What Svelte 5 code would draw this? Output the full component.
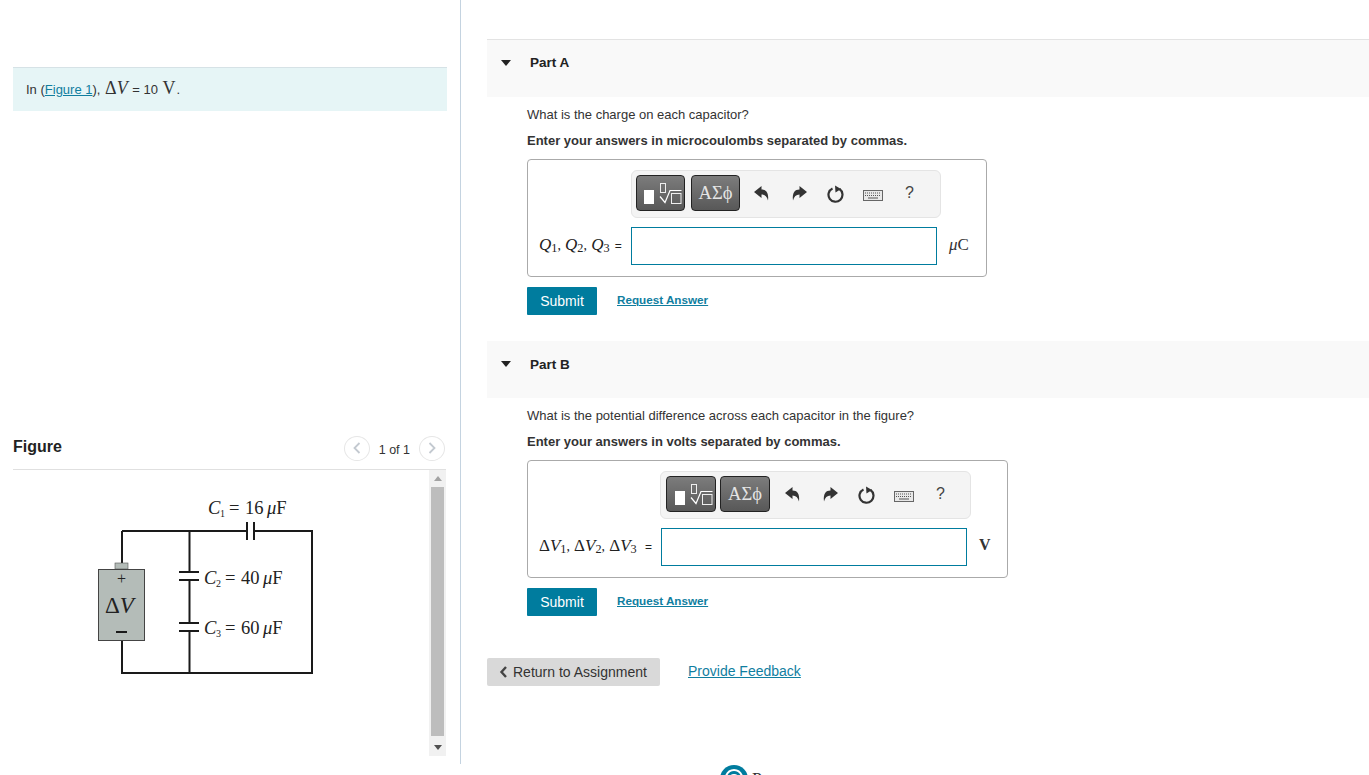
<script lang="ts">
  const parts = [
    {
      id: 'a',
      name: 'Part A',
      question: 'What is the charge on each capacitor?',
      hint: 'Enter your answers in microcoulombs separated by commas.',
    },
    {
      id: 'b',
      name: 'Part B',
      question: 'What is the potential difference across each capacitor in the figure?',
      hint: 'Enter your answers in volts separated by commas.',
    },
  ];
</script>

{#snippet toolbar()}
  <div class="toolbar">
    <button class="tool" aria-label="Templates">
      <svg width="47" height="34" viewBox="0 0 47 34">
        <rect x="7" y="14" width="10" height="14" fill="#fff" />
        <rect x="23.500" y="7.500" width="5" height="9" fill="none" stroke="#eee" />
        <path d="M23 20.500 L28 26.500 L33 14.500 H44.500" fill="none" stroke="#fff" stroke-width="1.200" />
        <rect x="34.500" y="17.500" width="9.500" height="10" fill="none" stroke="#eee" />
      </svg>
    </button>
    <button class="tool greek">ΑΣϕ</button>
    <svg class="ico undo" width="15" height="15" viewBox="0 0 15 15">
      <path d="M0 6 L7.500 0 V3.500 C12 3.500 15 6.500 14 14.500 C13 10.500 11 8.500 7.500 8.500 V12 Z" fill="#333" />
    </svg>
    <svg class="ico redo" width="15" height="15" viewBox="0 0 15 15">
      <path d="M15 6 L7.500 0 V3.500 C3 3.500 0 6.500 1 14.500 C2 10.500 4 8.500 7.500 8.500 V12 Z" fill="#333" />
    </svg>
    <svg class="ico reset" width="18" height="18" viewBox="0 0 18 18">
      <path d="M12.500 4 A7 7 0 1 1 5.500 3.400" fill="none" stroke="#333" stroke-width="2.200" />
      <path d="M8 0.500 L14 4 L8.500 7.500 Z" fill="#333" />
    </svg>
    <svg class="ico kbd" width="20" height="11" viewBox="0 0 20 11">
      <rect x="0.500" y="0.500" width="19" height="10" fill="#e8e8e8" stroke="#666" />
      <path d="M2 3 H18 M2 5.500 H18" stroke="#555" stroke-dasharray="1 1" />
      <path d="M5 8 H15" stroke="#555" />
    </svg>
    <span class="help">?</span>
  </div>
{/snippet}

{#snippet partA()}
  <span class="math"><i>Q</i><sub>1</sub><small>,</small> <i>Q</i><sub>2</sub><small>,</small> <i>Q</i><sub>3</sub></span> =
{/snippet}

{#snippet partB()}
  <span class="math">Δ<i>V</i><sub>1</sub><small>,</small> Δ<i>V</i><sub>2</sub><small>,</small> Δ<i>V</i><sub>3</sub></span> =
{/snippet}

{#snippet capLabel(x: number, y: number, n: number, val: string)}
  <text class="lbl cap" {x} {y}><tspan font-style="italic">C</tspan></text>
  <text class="lbl capsub" x={x + 12} y={y + 3}>{n}</text>
  <text class="lbl cap" x={x + 21} {y}>=</text>
  <text class="lbl cap" x={x + 37} {y}>{val}</text>
  <text class="lbl cap" x={x + 59} {y}><tspan font-style="italic">μ</tspan>F</text>
{/snippet}

<div class="page">
  <section class="left">
    <div class="intro">
      In (<a href="#fig">Figure 1</a>), <span class="math big">Δ<i>V</i></span> = 10 <span class="math big unit-v">V</span>.
    </div>

    <div class="figure-head">
      <h3>Figure</h3>
      <div class="pager">
        <span class="round">
          <svg width="8" height="12" viewBox="0 0 8 12"><path d="M6.500 1 L1.500 6 L6.500 11" fill="none" stroke="#c3c9d0" stroke-width="1.800" /></svg>
        </span>
        <span class="count">1 of 1</span>
        <span class="round">
          <svg width="8" height="12" viewBox="0 0 8 12"><path d="M1.500 1 L6.500 6 L1.500 11" fill="none" stroke="#c3c9d0" stroke-width="1.800" /></svg>
        </span>
      </div>
    </div>

    <div class="figure-body">
      <svg class="circuit" width="260" height="200" viewBox="0 0 260 200">
        <g fill="none" stroke="#1a1a1a" stroke-width="2">
          <path d="M42 31 H167 M174 31 H232 V173 H42 V141 M42 63 V31" />
          <path d="M109.500 31 V72 M109.500 80 V123 M109.500 131 V173" />
          <path d="M167 22 V40 M174 22 V40" />
          <path d="M99 72 H119 M99 80 H119 M99 123 H119 M99 131 H119" />
        </g>
        <rect x="35" y="63" width="13" height="6" fill="#b4bcb8" stroke="#555" stroke-width="0.600" />
        <rect x="18.500" y="69.500" width="46" height="71" fill="#b4bcb8" stroke="#444" />
        <text class="lbl" x="41.500" y="84" text-anchor="middle" font-size="16">+</text>
        <text class="lbl" x="39.500" y="113" text-anchor="middle" font-size="23">Δ<tspan font-style="italic">V</tspan></text>
        <rect x="36" y="131" width="11" height="2" fill="#1a1a1a" />
        {@render capLabel(128, 14, 1, '16')}
        {@render capLabel(124, 84, 2, '40')}
        {@render capLabel(124, 134, 3, '60')}
      </svg>
      <div class="scroll">
        <span class="arrow up"></span>
        <span class="thumb"></span>
        <span class="arrow down"></span>
      </div>
    </div>
  </section>

  <main class="right">
    {#each parts as part}
      <section class="part {part.id}">
        <header class="part-head">
          <span class="caret"></span>
          <h4>{part.name}</h4>
        </header>
        <div class="part-body">
          <p class="question">{part.question}</p>
          <p class="hint">{part.hint}</p>
          <div class="answer">
            {@render toolbar()}
            <div class="row">
              <span class="label">
                {#if part.id === 'a'}{@render partA()}{:else}{@render partB()}{/if}
              </span>
              <input type="text" aria-label="Answer" />
              {#if part.id === 'a'}
                <span class="unit"><i>μ</i>C</span>
              {:else}
                <span class="unit">V</span>
              {/if}
            </div>
          </div>
          <div class="actions">
            <button class="submit">Submit</button>
            <a class="request" href="#answer">Request Answer</a>
          </div>
        </div>
      </section>
    {/each}

    <div class="foot">
      <button class="back">
        <svg width="9" height="12" viewBox="0 0 9 12"><path d="M7 1 L2.500 6 L7 11" fill="none" stroke="#444" stroke-width="2.400" /></svg>
        Return to Assignment
      </button>
      <a class="feedback" href="#feedback">Provide Feedback</a>
    </div>

    <div class="brand">
      <svg width="28" height="28" viewBox="0 0 28 28">
        <circle cx="14" cy="14" r="14" fill="#007c9e" />
        <path d="M6 11 C9 3 19 3 22 11" fill="none" stroke="#fff" stroke-width="2" />
        <path d="M10 13 C11 9 17 9 18 13" fill="none" stroke="#fff" stroke-width="2" />
      </svg>
      <span>Pearson</span>
    </div>
  </main>
</div>

<style>
  :global(body) {
    margin: 0;
    background: #fff;
    overflow: hidden;
  }
  .page {
    display: flex;
    align-items: flex-start;
    height: 775px;
    overflow: hidden;
    font-family: 'Liberation Sans', Arial, sans-serif;
    font-size: 13px;
    color: #333;
  }
  a {
    color: #107e9f;
  }
  .math {
    font-family: 'Liberation Serif', 'Times New Roman', serif;
  }
  .math sub {
    font-size: 0.72em;
    line-height: 0;
    vertical-align: -0.18em;
  }
  .math small {
    font-size: 0.8em;
  }

  .left {
    width: 461px;
    height: 764px;
    flex: none;
    box-sizing: border-box;
    border-right: 1px solid #c4d3e0;
    padding-top: 67px;
  }
  .intro {
    margin: 0 13px;
    width: 434px;
    height: 44px;
    box-sizing: border-box;
    padding: 11px 13px 0;
    background: #e6f5f6;
    border-top: 1px solid #d6e2e6;
    font-size: 13px;
    line-height: 18px;
  }
  .math.big {
    font-size: 18px;
    margin: 0 1px;
  }
  .figure-head {
    display: flex;
    align-items: center;
    justify-content: space-between;
    margin: 319px 0 0 13px;
    height: 40px;
    border-bottom: 1px solid #e0e0e0;
    box-sizing: border-box;
    width: 433px;
  }
  .figure-head h3 {
    margin: 0 0 6px;
    font-size: 16px;
    font-weight: bold;
    color: #222;
  }
  .pager {
    display: flex;
    align-items: center;
    gap: 9px;
    padding-bottom: 3px;
    margin-right: 1px;
  }
  .round {
    width: 24px;
    height: 23px;
    border: 1px solid #e6e6e6;
    border-radius: 50%;
    display: flex;
    align-items: center;
    justify-content: center;
  }
  .count {
    font-size: 12.500px;
    color: #333;
    margin-top: 3px;
  }
  .figure-body {
    display: flex;
    justify-content: space-between;
    margin-left: 80px;
    width: 366px;
    height: 286px;
  }
  .circuit {
    margin-top: 30px;
  }
  .lbl {
    font-family: 'Liberation Serif', 'Times New Roman', serif;
    fill: #222;
  }
  .cap {
    font-size: 18.500px;
  }
  .capsub {
    font-size: 10px;
  }
  .scroll {
    width: 17px;
    background: #f1f1f1;
    display: flex;
    flex-direction: column;
    align-items: center;
  }
  .thumb {
    width: 13px;
    height: 249px;
    background: #bdbdbd;
  }
  .arrow {
    width: 0;
    height: 0;
    border-left: 4px solid transparent;
    border-right: 4px solid transparent;
  }
  .arrow.up {
    border-bottom: 5px solid #a3a3a3;
    margin: 6px 0;
  }
  .arrow.down {
    border-top: 5px solid #505050;
    margin-top: 9px;
  }

  .right {
    flex: 1;
    padding: 39px 0 0 26px;
    min-width: 0;
  }
  .part-head {
    height: 57px;
    background: #f9f9f9;
    display: flex;
    align-items: center;
    box-sizing: border-box;
    padding: 0 0 11px 14px;
  }
  .part.a .part-head {
    height: 58px;
    padding-bottom: 12px;
    border-top: 1px solid #e3e3e3;
  }
  .caret {
    width: 0;
    height: 0;
    border-left: 5.500px solid transparent;
    border-right: 5.500px solid transparent;
    border-top: 6px solid #222;
  }
  .part-head h4 {
    margin: 0 0 0 19px;
    font-size: 13.500px;
    font-weight: bold;
    color: #222;
  }
  .part-body {
    padding: 9px 0 0 40px;
  }
  .part.a {
    height: 302px;
  }
  .part.b {
    height: 317px;
  }
  .question {
    margin: 0;
    font-size: 13px;
    line-height: 18px;
    color: #333;
  }
  .hint {
    margin: 8px 0 0;
    font-size: 13px;
    line-height: 18px;
    font-weight: bold;
    color: #333;
  }
  .answer {
    margin-top: 9px;
    height: 118px;
    box-sizing: border-box;
    border: 1px solid #aaa;
    border-radius: 4px;
    padding-top: 10px;
  }
  .part.a .answer {
    width: 460px;
  }
  .part.b .answer {
    width: 481px;
  }
  .toolbar {
    width: 310px;
    height: 48px;
    box-sizing: border-box;
    background: #f4f4f4;
    border: 1px solid #e4e4e4;
    border-radius: 6px;
    display: flex;
    align-items: center;
    padding-left: 4px;
  }
  .part.a .toolbar {
    margin-left: 103px;
  }
  .part.b .toolbar {
    margin-left: 132px;
    width: 311px;
    padding-left: 5px;
  }
  .tool {
    width: 49px;
    height: 36px;
    padding: 0;
    margin: 0 6px 2px 0;
    border: 1px solid #222;
    border-radius: 4px;
    background: linear-gradient(#7c7c7c, #585858);
    display: flex;
    align-items: center;
    justify-content: center;
  }
  .part.b .tool {
    width: 50px;
    margin-right: 4px;
  }
  .tool.greek,
  .part.b .tool.greek {
    margin-right: 0;
    font-family: 'Liberation Serif', 'DejaVu Serif', serif;
    font-size: 18.500px;
    color: #e4e4e4;
  }
  .ico {
    flex: none;
  }
  .undo {
    margin-left: 14px;
    margin-bottom: 2px;
  }
  .part.b .undo {
    margin-left: 15px;
  }
  .redo {
    margin-left: 23px;
    margin-bottom: 2px;
  }
  .reset {
    margin-left: 20px;
    margin-bottom: 1px;
  }
  .kbd {
    margin-left: 18px;
    margin-top: 2px;
  }
  .help {
    margin-left: 22px;
    margin-bottom: 2px;
    font-size: 16px;
    color: #444;
  }
  .row {
    display: flex;
    align-items: center;
    margin-top: 9px;
    height: 38px;
  }
  .label {
    box-sizing: border-box;
    padding: 0 0 3px 11px;
    font-size: 12px;
    white-space: nowrap;
    color: #222;
  }
  .label .math {
    font-size: 17px;
    margin-right: 2px;
  }
  .part.b .label .math {
    margin-right: 5px;
  }
  .part.a .label {
    width: 103px;
  }
  .part.b .label {
    width: 133px;
  }
  input {
    width: 306px;
    height: 38px;
    box-sizing: border-box;
    border: 1px solid #007c9e;
    background: #fff;
    outline: none;
    padding: 0;
  }
  .unit {
    margin: 0 0 3px 12px;
    font-family: 'Liberation Serif', 'Times New Roman', serif;
    font-size: 17px;
    color: #333;
  }
  .part.b .unit {
    margin-bottom: 5px;
    font-weight: bold;
    font-size: 16px;
  }
  .actions {
    display: flex;
    align-items: center;
    margin-top: 10px;
  }
  .submit {
    width: 70px;
    height: 28px;
    padding: 0;
    border: none;
    border-radius: 1px;
    background: #007c9e;
    color: #fff;
    font-family: inherit;
    font-size: 14px;
  }
  .request {
    margin-left: 20px;
    margin-bottom: 3px;
    font-size: 11.700px;
    font-weight: bold;
  }
  .foot {
    display: flex;
    align-items: center;
  }
  .back {
    width: 173px;
    height: 28px;
    padding: 0 0 0 12px;
    border: none;
    border-radius: 2px;
    background: #d9d9d9;
    color: #333;
    font-family: inherit;
    font-size: 14px;
    display: flex;
    align-items: center;
    gap: 5px;
    white-space: nowrap;
  }
  .feedback {
    margin: 0 0 2px 28px;
    font-size: 14px;
  }
  .brand {
    display: flex;
    align-items: flex-start;
    gap: 4px;
    margin: 79px 0 0 233px;
    font-family: 'Liberation Serif', serif;
    font-size: 18px;
    color: #333;
  }
  .brand span {
    margin-top: 5px;
  }
</style>
